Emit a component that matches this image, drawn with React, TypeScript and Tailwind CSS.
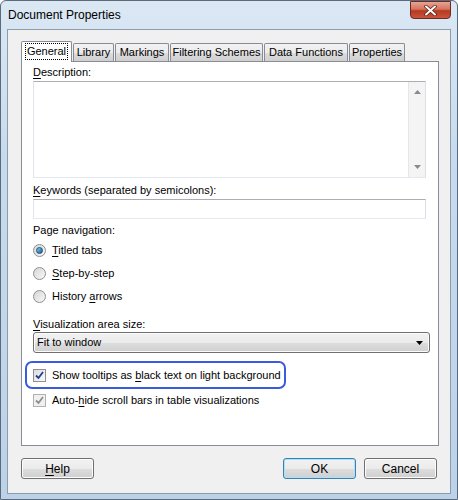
import React from 'react';

const font = { fontFamily: '"Liberation Sans", Arial, sans-serif' };

function U({ children }: { children: React.ReactNode }) {
  return <span className="underline underline-offset-2">{children}</span>;
}

function Radio({ checked, children }: { checked?: boolean; children: React.ReactNode }) {
  return (
    <div className="flex items-center h-[13px] mb-[10px]">
      <span className="w-[13px] h-[13px] rounded-full border border-[#8e8f8f] bg-gradient-to-br from-[#d6d6d6] to-[#f8f8f8] flex items-center justify-center shrink-0">
        {checked && <span className="w-[7px] h-[7px] rounded-full bg-gradient-to-br from-[#7fd0f6] to-[#0d5d92] border border-[#1b4f7a]" />}
      </span>
      <span className="ml-[6px] leading-none whitespace-nowrap">{children}</span>
    </div>
  );
}

function Check({ disabled, children }: { disabled?: boolean; children: React.ReactNode }) {
  return (
    <div className="flex items-center h-[13px]">
      <span className={`w-[13px] h-[13px] border ${disabled ? 'border-[#b1b1b1] bg-[#f0f0f0]' : 'border-[#8e8f8f] bg-gradient-to-br from-[#dcdcdc] to-[#fbfbfb]'} flex items-center justify-center shrink-0`}>
        <svg width="9" height="9" viewBox="0 0 9 9">
          <path d="M1 4.5 L3.5 7 L8 1" fill="none" stroke={disabled ? '#8d8d8d' : '#1c3f8f'} strokeWidth="1.8" />
        </svg>
      </span>
      <span className="ml-[6px] leading-none whitespace-nowrap">{children}</span>
    </div>
  );
}

function Button({ children, primary }: { children: React.ReactNode; primary?: boolean }) {
  return (
    <div
      className={`w-[73px] h-[21px] rounded-[3px] border ${primary ? 'border-[#3c7fb1] shadow-[inset_0_0_0_1px_#a6e4fb]' : 'border-[#707070] shadow-[inset_0_0_0_1px_#fcfcfc]'} bg-[linear-gradient(#f2f2f2_0%,#ebebeb_50%,#dddddd_51%,#cfcfcf_100%)] flex items-center justify-center text-[12px]`}
    >
      {children}
    </div>
  );
}

export default function App() {
  const tabs = [
    { label: 'Library', w: 41 },
    { label: 'Markings', w: 54 },
    { label: 'Filtering Schemes', w: 93 },
    { label: 'Data Functions', w: 84 },
    { label: 'Properties', w: 56 },
  ];

  return (
    <div style={font} className="w-[458px] h-[500px] relative overflow-hidden text-black bg-[linear-gradient(180deg,#dbe8f4_0%,#c8dbee_30%,#bcd2e8_100%)] border border-[#5a6b7c] rounded-t-[6px]">
      {/* title bar */}
      <div className="h-[28px] flex items-center pl-[7px] text-[12px] text-black">Document Properties</div>
      <div className="absolute right-[6px] top-0 w-[41px] h-[18px] rounded-b-[4px] border border-[#6d2a23] bg-[linear-gradient(#e8a493_0%,#d4735e_45%,#b63a20_55%,#c9553a_100%)] flex items-center justify-center">
        <svg width="13" height="11" viewBox="0 0 13 11">
          <path d="M2 1.5 L11 9.5 M11 1.5 L2 9.5" stroke="#5a1a10" strokeWidth="3.4" strokeLinecap="round" />
          <path d="M2 1.5 L11 9.5 M11 1.5 L2 9.5" stroke="#ffffff" strokeWidth="2" strokeLinecap="round" />
        </svg>
      </div>

      {/* client area */}
      <div className="mx-[6px] h-[465px] bg-[#f0f0f0] border border-[#8d9cab] flex flex-col pl-[13px] pr-[10px] pt-[11px] text-[11px]">
        {/* tabs */}
        <div className="flex items-end h-[20px] relative z-10">
          <div className="w-[51px] h-[21px] -mb-[1px] bg-white border border-[#898c95] border-b-0 rounded-t-[2px] flex items-start justify-center pt-[2px]">
            <span className="leading-[15px] px-[1px] outline outline-1 outline-dotted outline-black">General</span>
          </div>
          {tabs.map((t) => (
            <div
              key={t.label}
              style={{ width: t.w }}
              className="ml-[1px] h-[18px] border border-[#898c95] border-b-0 rounded-t-[2px] bg-[linear-gradient(#f2f2f2_0%,#ebebeb_50%,#dddddd_51%,#cfcfcf_100%)] flex items-center justify-center whitespace-nowrap"
            >
              {t.label}
            </div>
          ))}
        </div>

        {/* panel */}
        <div className="w-[418px] h-[385px] bg-white border border-[#898c95] flex flex-col pl-[11px] pr-[12px] pt-[3px] whitespace-nowrap">
          <div className="leading-[14px]"><U>D</U>escription:</div>
          <div className="mt-[2px] h-[97px] border border-[#abadb3] border-l-[#e2e3ea] border-r-[#dbdfe6] border-b-[#e3e9ef] flex justify-end">
            <div className="w-[17px] h-full bg-[#f4f4f4] border-l border-[#e6e6e6] flex flex-col items-center justify-between py-[8px]">
              <svg width="7" height="4" viewBox="0 0 7 4"><path d="M0 4 L3.5 0 L7 4 Z" fill="#8a8a8a" /></svg>
              <svg width="7" height="4" viewBox="0 0 7 4"><path d="M0 0 L3.5 4 L7 0 Z" fill="#8a8a8a" /></svg>
            </div>
          </div>

          <div className="mt-[5px] leading-[14px]"><U>K</U>eywords (separated by semicolons):</div>
          <div className="mt-[2px] h-[20px] border border-[#abadb3] border-l-[#e2e3ea] border-r-[#dbdfe6] border-b-[#e3e9ef]" />

          <div className="mt-[4px] leading-[14px]">Page navigation:</div>
          <div className="mt-[7px] flex flex-col">
            <Radio checked><U>T</U>itled tabs</Radio>
            <Radio><U>S</U>tep-by-step</Radio>
            <Radio>History <U>a</U>rrows</Radio>
          </div>

          <div className="mt-[4px] leading-[14px]"><U>V</U>isualization area size:</div>
          <div className="mt-[1px] w-[397px] h-[21px] rounded-[3px] border border-[#707070] bg-[linear-gradient(#f2f2f2_0%,#ebebeb_50%,#dddddd_51%,#cfcfcf_100%)] shadow-[inset_0_0_0_1px_#fcfcfc] flex items-center justify-between pl-[3px] pr-[6px]">
            <span>Fit to window</span>
            <svg width="7" height="4" viewBox="0 0 7 4"><path d="M0 0 L3.5 4 L7 0 Z" fill="#000" /></svg>
          </div>

          <div className="mt-[8px] -ml-[8px] w-[261px] h-[28px] rounded-[7px] border-2 border-[#3a5be0] flex items-center pl-[6px]">
            <Check>Show tooltips as <U>b</U>lack text on light background</Check>
          </div>
          <div className="mt-[5px]">
            <Check disabled>Auto-<U>h</U>ide scroll bars in table visualizations</Check>
          </div>
        </div>

        {/* buttons */}
        <div className="mt-[12px] flex items-center pr-[3px]">
          <Button><U>H</U>elp</Button>
          <div className="flex-1" />
          <Button primary>OK</Button>
          <div className="w-[8px]" />
          <Button>Cancel</Button>
        </div>
      </div>
    </div>
  );
}
